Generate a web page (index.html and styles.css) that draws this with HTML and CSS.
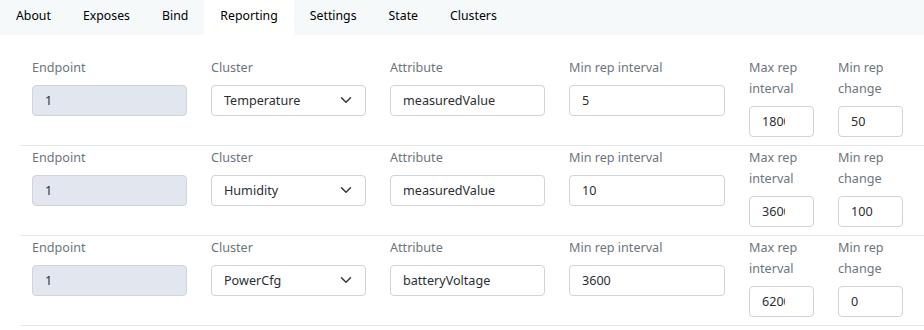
FILE: index.html
```html
<!DOCTYPE html>
<html lang="en">
<head>
    <meta charset="UTF-8">
    <title>Reporting</title>
    <link rel="stylesheet" href="styles.css">
</head>
<body>
    <nav class="tabs">
        <a class="tab">About</a>
        <a class="tab">Exposes</a>
        <a class="tab">Bind</a>
        <a class="tab active">Reporting</a>
        <a class="tab">Settings</a>
        <a class="tab">State</a>
        <a class="tab">Clusters</a>
    </nav>

    <div class="reporting">
        <div class="rule">
            <div class="field">
                <label>Endpoint</label>
                <input class="control" value="1" disabled>
            </div>
            <div class="field">
                <label>Cluster</label>
                <div class="select-wrap">
                    <select class="control"><option>Temperature</option></select>
                    <svg class="chevron" viewBox="0 0 16 16"><path d="m2 5 6 6 6-6"/></svg>
                </div>
            </div>
            <div class="field">
                <label>Attribute</label>
                <input class="control" value="measuredValue">
            </div>
            <div class="field">
                <label>Min rep interval</label>
                <input class="control" value="5">
            </div>
            <div class="field">
                <label>Max rep interval</label>
                <input class="control num" value="1800">
            </div>
            <div class="field">
                <label>Min rep change</label>
                <input class="control num" value="50">
            </div>
        </div>

        <div class="rule">
            <div class="field">
                <label>Endpoint</label>
                <input class="control" value="1" disabled>
            </div>
            <div class="field">
                <label>Cluster</label>
                <div class="select-wrap">
                    <select class="control"><option>Humidity</option></select>
                    <svg class="chevron" viewBox="0 0 16 16"><path d="m2 5 6 6 6-6"/></svg>
                </div>
            </div>
            <div class="field">
                <label>Attribute</label>
                <input class="control" value="measuredValue">
            </div>
            <div class="field">
                <label>Min rep interval</label>
                <input class="control" value="10">
            </div>
            <div class="field">
                <label>Max rep interval</label>
                <input class="control num" value="3600">
            </div>
            <div class="field">
                <label>Min rep change</label>
                <input class="control num" value="100">
            </div>
        </div>

        <div class="rule">
            <div class="field">
                <label>Endpoint</label>
                <input class="control" value="1" disabled>
            </div>
            <div class="field">
                <label>Cluster</label>
                <div class="select-wrap">
                    <select class="control"><option>PowerCfg</option></select>
                    <svg class="chevron" viewBox="0 0 16 16"><path d="m2 5 6 6 6-6"/></svg>
                </div>
            </div>
            <div class="field">
                <label>Attribute</label>
                <input class="control" value="batteryVoltage">
            </div>
            <div class="field">
                <label>Min rep interval</label>
                <input class="control" value="3600">
            </div>
            <div class="field">
                <label>Max rep interval</label>
                <input class="control num" value="6200">
            </div>
            <div class="field">
                <label>Min rep change</label>
                <input class="control num" value="0">
            </div>
        </div>
    </div>
</body>
</html>
```
FILE: styles.css
```css
* {
    margin: 0;
    padding: 0;
    box-sizing: border-box;
}

body {
    font-family: 'Noto Sans', sans-serif;
    font-size: 12.6px;
    color: #212529;
    background: #fff;
}

.tabs {
    display: flex;
    height: 35px;
    background: #f5f9fa;
}

.tab {
    padding: 0 16px;
    font-size: 12.3px;
    line-height: 32px;
    color: #000;
    cursor: pointer;
}

.tab.active {
    background: #fff;
}

.reporting {
    padding: 21px 0 0 20px;
}

.rule {
    display: grid;
    grid-template-columns: 155px 155px 155px 156px 65px 65px;
    column-gap: 24px;
    align-items: start;
    padding: 1px 0 8px 12px;
    border-bottom: 1px solid #e3e8ec;
}

.field label {
    display: block;
    line-height: 21px;
    margin-bottom: 7px;
    color: #6c757d;
}

.control {
    display: block;
    width: 100%;
    height: 31px;
    padding: 0 12px;
    font-family: inherit;
    font-size: 12.6px;
    color: #2b2f33;
    background: #fff;
    border: 1px solid #ced4da;
    border-radius: 4px;
    outline: none;
    appearance: none;
}

.control.num {
    padding-right: 28px;
}

.control:disabled {
    background: #e2e6ee;
    color: #2b2f33;
    opacity: 1;
}

.select-wrap {
    position: relative;
}

.chevron {
    position: absolute;
    right: 12px;
    top: 9px;
    width: 16px;
    height: 12px;
    fill: none;
    stroke: #343a40;
    stroke-width: 2;
    stroke-linecap: round;
    stroke-linejoin: round;
}
```
